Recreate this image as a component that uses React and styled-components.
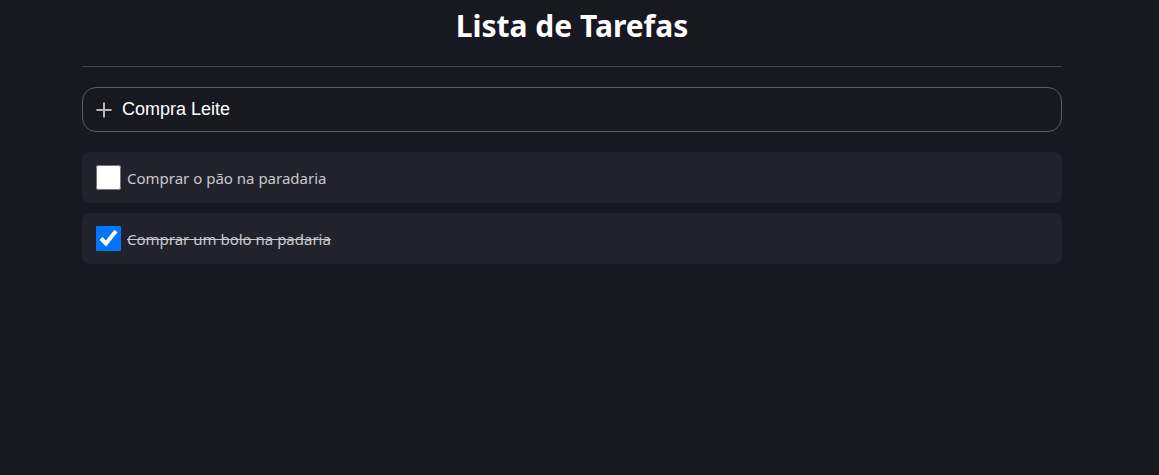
import React, { useState } from "react";
import styled, { createGlobalStyle } from "styled-components";

const Global = createGlobalStyle`
  html, body { margin: 0; padding: 0; background: #181820; }
  body { font-family: "Noto Sans", "Open Sans", sans-serif; color: #fff; }
`;

const Page = styled.div`
  min-height: 475px;
  background: #181820;
  display: flex;
  padding-left: 82px;
`;

const Container = styled.div`
  width: 980px;
  display: flex;
  flex-direction: column;
`;

const Title = styled.h1`
  margin: 0 0 20px;
  height: 67px;
  padding-top: 5px;
  box-sizing: border-box;
  text-align: center;
  font-family: "Noto Sans", "Open Sans", sans-serif;
  font-size: 30px;
  font-weight: 700;
  line-height: 42px;
  color: #ffffff;
  border-bottom: 1px solid #45454b;
`;

const InputBox = styled.label`
  display: flex;
  align-items: center;
  gap: 9px;
  height: 45px;
  box-sizing: border-box;
  padding: 0 12px;
  border: 1px solid #5a5a5f;
  border-radius: 14px;
  background: #181820;
  margin-bottom: 20px;
`;

const Input = styled.input`
  flex: 1;
  background: transparent;
  border: none;
  outline: none;
  color: #ffffff;
  font-family: "Liberation Sans", Arial, sans-serif;
  font-size: 18px;
  padding: 0;
`;

const List = styled.div`
  display: flex;
  flex-direction: column;
  gap: 10px;
`;

const Item = styled.div`
  display: flex;
  align-items: center;
  gap: 6px;
  height: 51px;
  box-sizing: border-box;
  padding: 0 14px;
  background: #22222d;
  border-radius: 8px;
`;

const Check = styled.input`
  width: 25px;
  height: 25px;
  margin: 0;
  accent-color: #0075ff;
`;

const Text = styled.span`
  font-family: "Noto Sans", "Open Sans", sans-serif;
  font-size: 15px;
  color: #c8c8cc;
  text-decoration: ${(p) => (p.$done ? "line-through" : "none")};
`;

const PlusIcon = () => (
  <svg width="18" height="18" viewBox="0 0 18 18">
    <path d="M9 1.5v15M1.5 9h15" stroke="#b8b8bc" strokeWidth="2" fill="none" />
  </svg>
);

export default function App() {
  const [value, setValue] = useState("Compra Leite");
  const [tasks, setTasks] = useState([
    { id: 1, text: "Comprar o pão na paradaria", done: false },
    { id: 2, text: "Comprar um bolo na padaria", done: true },
  ]);
  const toggle = (id) =>
    setTasks((t) => t.map((x) => (x.id === id ? { ...x, done: !x.done } : x)));
  return (
    <Page>
      <Global />
      <Container>
        <Title>Lista de Tarefas</Title>
        <InputBox>
          <PlusIcon />
          <Input value={value} onChange={(e) => setValue(e.target.value)} />
        </InputBox>
        <List>
          {tasks.map((t) => (
            <Item key={t.id}>
              <Check type="checkbox" checked={t.done} onChange={() => toggle(t.id)} />
              <Text $done={t.done}>{t.text}</Text>
            </Item>
          ))}
        </List>
      </Container>
    </Page>
  );
}
